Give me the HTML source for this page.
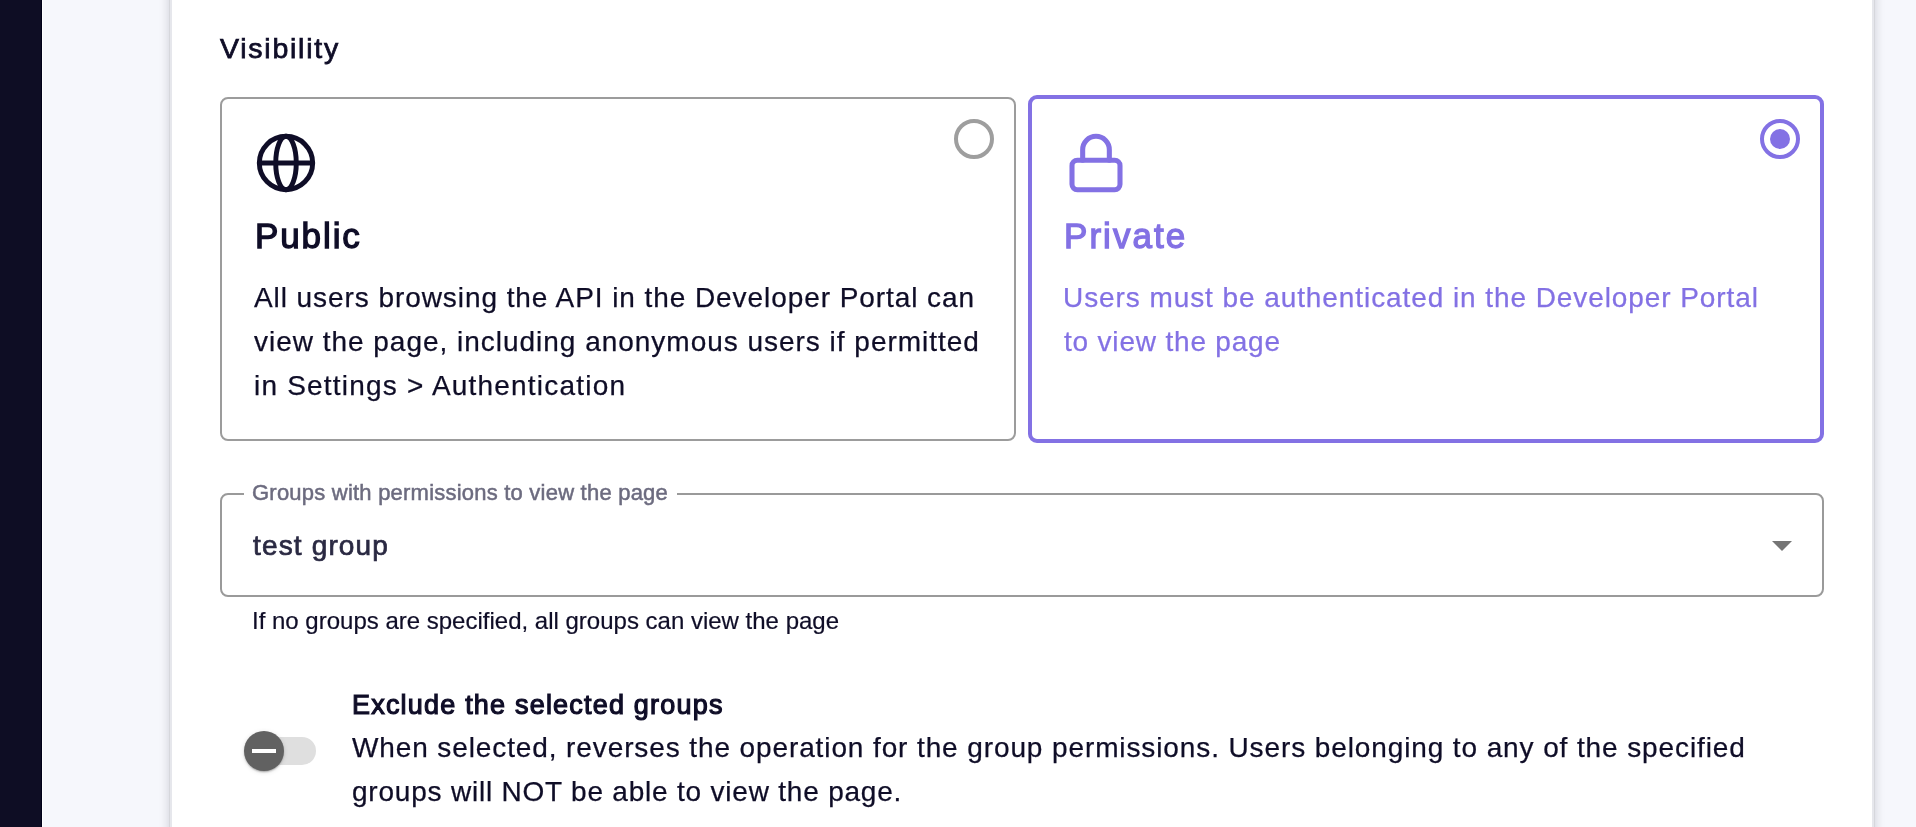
<!DOCTYPE html>
<html>
<head>
<meta charset="utf-8">
<style>
html,body{margin:0;padding:0;width:1916px;height:827px;overflow:hidden;background:#f6f7fc;font-family:"Liberation Sans",sans-serif;}
#nav{position:absolute;left:0;top:0;width:42px;height:827px;background:#0e0d24;}
#navedge{position:absolute;left:41px;top:0;width:1px;height:827px;background:#000018;}
#navw{position:absolute;left:42px;top:0;width:1px;height:827px;background:#ffffff;}
#cardo{position:absolute;left:169px;top:-20px;width:1706px;height:900px;box-sizing:border-box;background:#e6e7ec;border-left:1px solid #d6d7dc;border-right:1px solid #d6d7dc;box-shadow:0 0 9px 1px rgba(0,0,30,0.14);}
#card{position:absolute;left:172px;top:-20px;width:1700px;height:900px;background:#fff;}
.t{position:absolute;white-space:pre;color:#0f0d27;line-height:1;will-change:transform;}
#vis{left:220px;top:0;font-size:28.5px;letter-spacing:1.75px;-webkit-text-stroke:0.75px currentColor;}
.opt{position:absolute;box-sizing:border-box;background:#fff;}
#pub{left:220px;top:97px;width:796px;height:344px;border:2px solid #9c9c9c;border-radius:8px;}
#priv{left:1028px;top:95px;width:796px;height:348px;border:4px solid #8371e4;border-radius:9px;}
.ttl{font-size:35px;-webkit-text-stroke:1.3px currentColor;}
.body{font-size:28px;letter-spacing:0.88px;line-height:44px;-webkit-text-stroke:0.25px currentColor;}
#field{position:absolute;left:220px;top:493px;width:1604px;height:104px;box-sizing:border-box;border:2px solid #9a9a9a;border-radius:8px;}
#lbl{font-size:22px;color:#6c6b7f;letter-spacing:0.22px;-webkit-text-stroke:0.5px currentColor;background:#fff;padding:0 9px 0 8px;}
#tg{font-size:28px;color:#2a2942;letter-spacing:1.15px;-webkit-text-stroke:0.7px currentColor;}
#help{font-size:24px;-webkit-text-stroke:0.2px currentColor;}
#excl{font-size:27px;-webkit-text-stroke:1.15px currentColor;letter-spacing:1.2px;}
#desc1,#desc2{font-size:28px;line-height:44px;-webkit-text-stroke:0.25px currentColor;}
</style>
</head>
<body>
<div id="nav"></div><div id="navedge"></div><div id="navw"></div>
<div id="cardo"></div><div id="card"></div>
<div class="t" id="vis" style="top:33.5px">Visibility</div>

<div class="opt" id="pub"></div>
<div class="opt" id="priv"></div>

<svg id="globe" style="position:absolute;left:254px;top:131px" width="64" height="64" viewBox="0 0 24 24" fill="none" stroke="#0f0d27" stroke-width="1.85" stroke-linecap="round" stroke-linejoin="round">
  <circle cx="12" cy="12" r="10"/>
  <ellipse cx="12" cy="12" rx="3.85" ry="10"/>
  <path d="M2 12h20"/>
</svg>
<svg id="lock" style="position:absolute;left:1064px;top:131px" width="64" height="64" viewBox="0 0 24 24" fill="none" stroke="#8371e4" stroke-width="1.9" stroke-linecap="round" stroke-linejoin="round">
  <rect width="18" height="11" x="3" y="11" rx="2" ry="2"/>
  <path d="M7 11V7a5 5 0 0 1 10 0v4"/>
</svg>

<svg id="r1" style="position:absolute;left:950px;top:115px" width="48" height="48" viewBox="0 0 48 48">
  <circle cx="24" cy="24" r="18" fill="none" stroke="#9e9e9e" stroke-width="4"/>
</svg>
<svg id="r2" style="position:absolute;left:1756px;top:115px" width="48" height="48" viewBox="0 0 48 48">
  <circle cx="24" cy="24" r="18" fill="none" stroke="#8371e4" stroke-width="4"/>
  <circle cx="24" cy="24" r="10" fill="#8371e4"/>
</svg>

<div class="t ttl" id="pubt" style="left:255px;top:217.5px;letter-spacing:1.9px">Public</div>
<div class="t ttl" id="privt" style="left:1064px;top:217.5px;letter-spacing:2.05px;color:#8371e4">Private</div>
<div class="t body" id="pubd1" style="left:254px;top:276px;letter-spacing:0.93px">All users browsing the API in the Developer Portal can</div>
<div class="t body" id="pubd2" style="left:254px;top:320px;letter-spacing:0.98px">view the page, including anonymous users if permitted</div>
<div class="t body" id="pubd3" style="left:254px;top:364px;letter-spacing:1.2px">in Settings &gt; Authentication</div>
<div class="t body" id="privd1" style="left:1063px;top:276px;color:#8371e4;letter-spacing:0.92px">Users must be authenticated in the Developer Portal</div>
<div class="t body" id="privd2" style="left:1064px;top:320px;color:#8371e4;letter-spacing:0.81px">to view the page</div>

<div id="field"></div>
<div class="t" id="lbl" style="left:244px;top:482px">Groups with permissions to view the page</div>
<div class="t" id="tg" style="left:253px;top:532px">test group</div>
<svg id="arrow" style="position:absolute;left:1772px;top:541px" width="20" height="10" viewBox="0 0 20 10"><path d="M0 0 L20 0 L10 10 Z" fill="#757575"/></svg>
<div class="t" id="help" style="left:252px;top:609px">If no groups are specified, all groups can view the page</div>

<div id="track" style="position:absolute;left:248px;top:737px;width:68px;height:28px;border-radius:14px;background:#dfdfdf"></div>
<div id="thumb" style="position:absolute;left:244px;top:731px;width:40px;height:40px;border-radius:20px;background:#616161;box-shadow:0 2px 2px -1px rgba(0,0,0,0.2),0 1px 2px 0 rgba(0,0,0,0.14),0 1px 5px 0 rgba(0,0,0,0.12)"></div>
<div id="minus" style="position:absolute;left:252px;top:749px;width:24px;height:4px;background:#fff"></div>

<div class="t" id="excl" style="left:352px;top:692px">Exclude the selected groups</div>
<div class="t" id="desc1" style="left:352px;top:726px;letter-spacing:0.89px">When selected, reverses the operation for the group permissions. Users belonging to any of the specified</div>
<div class="t" id="desc2" style="left:352px;top:770px;letter-spacing:0.79px">groups will NOT be able to view the page.</div>
</body>
</html>
